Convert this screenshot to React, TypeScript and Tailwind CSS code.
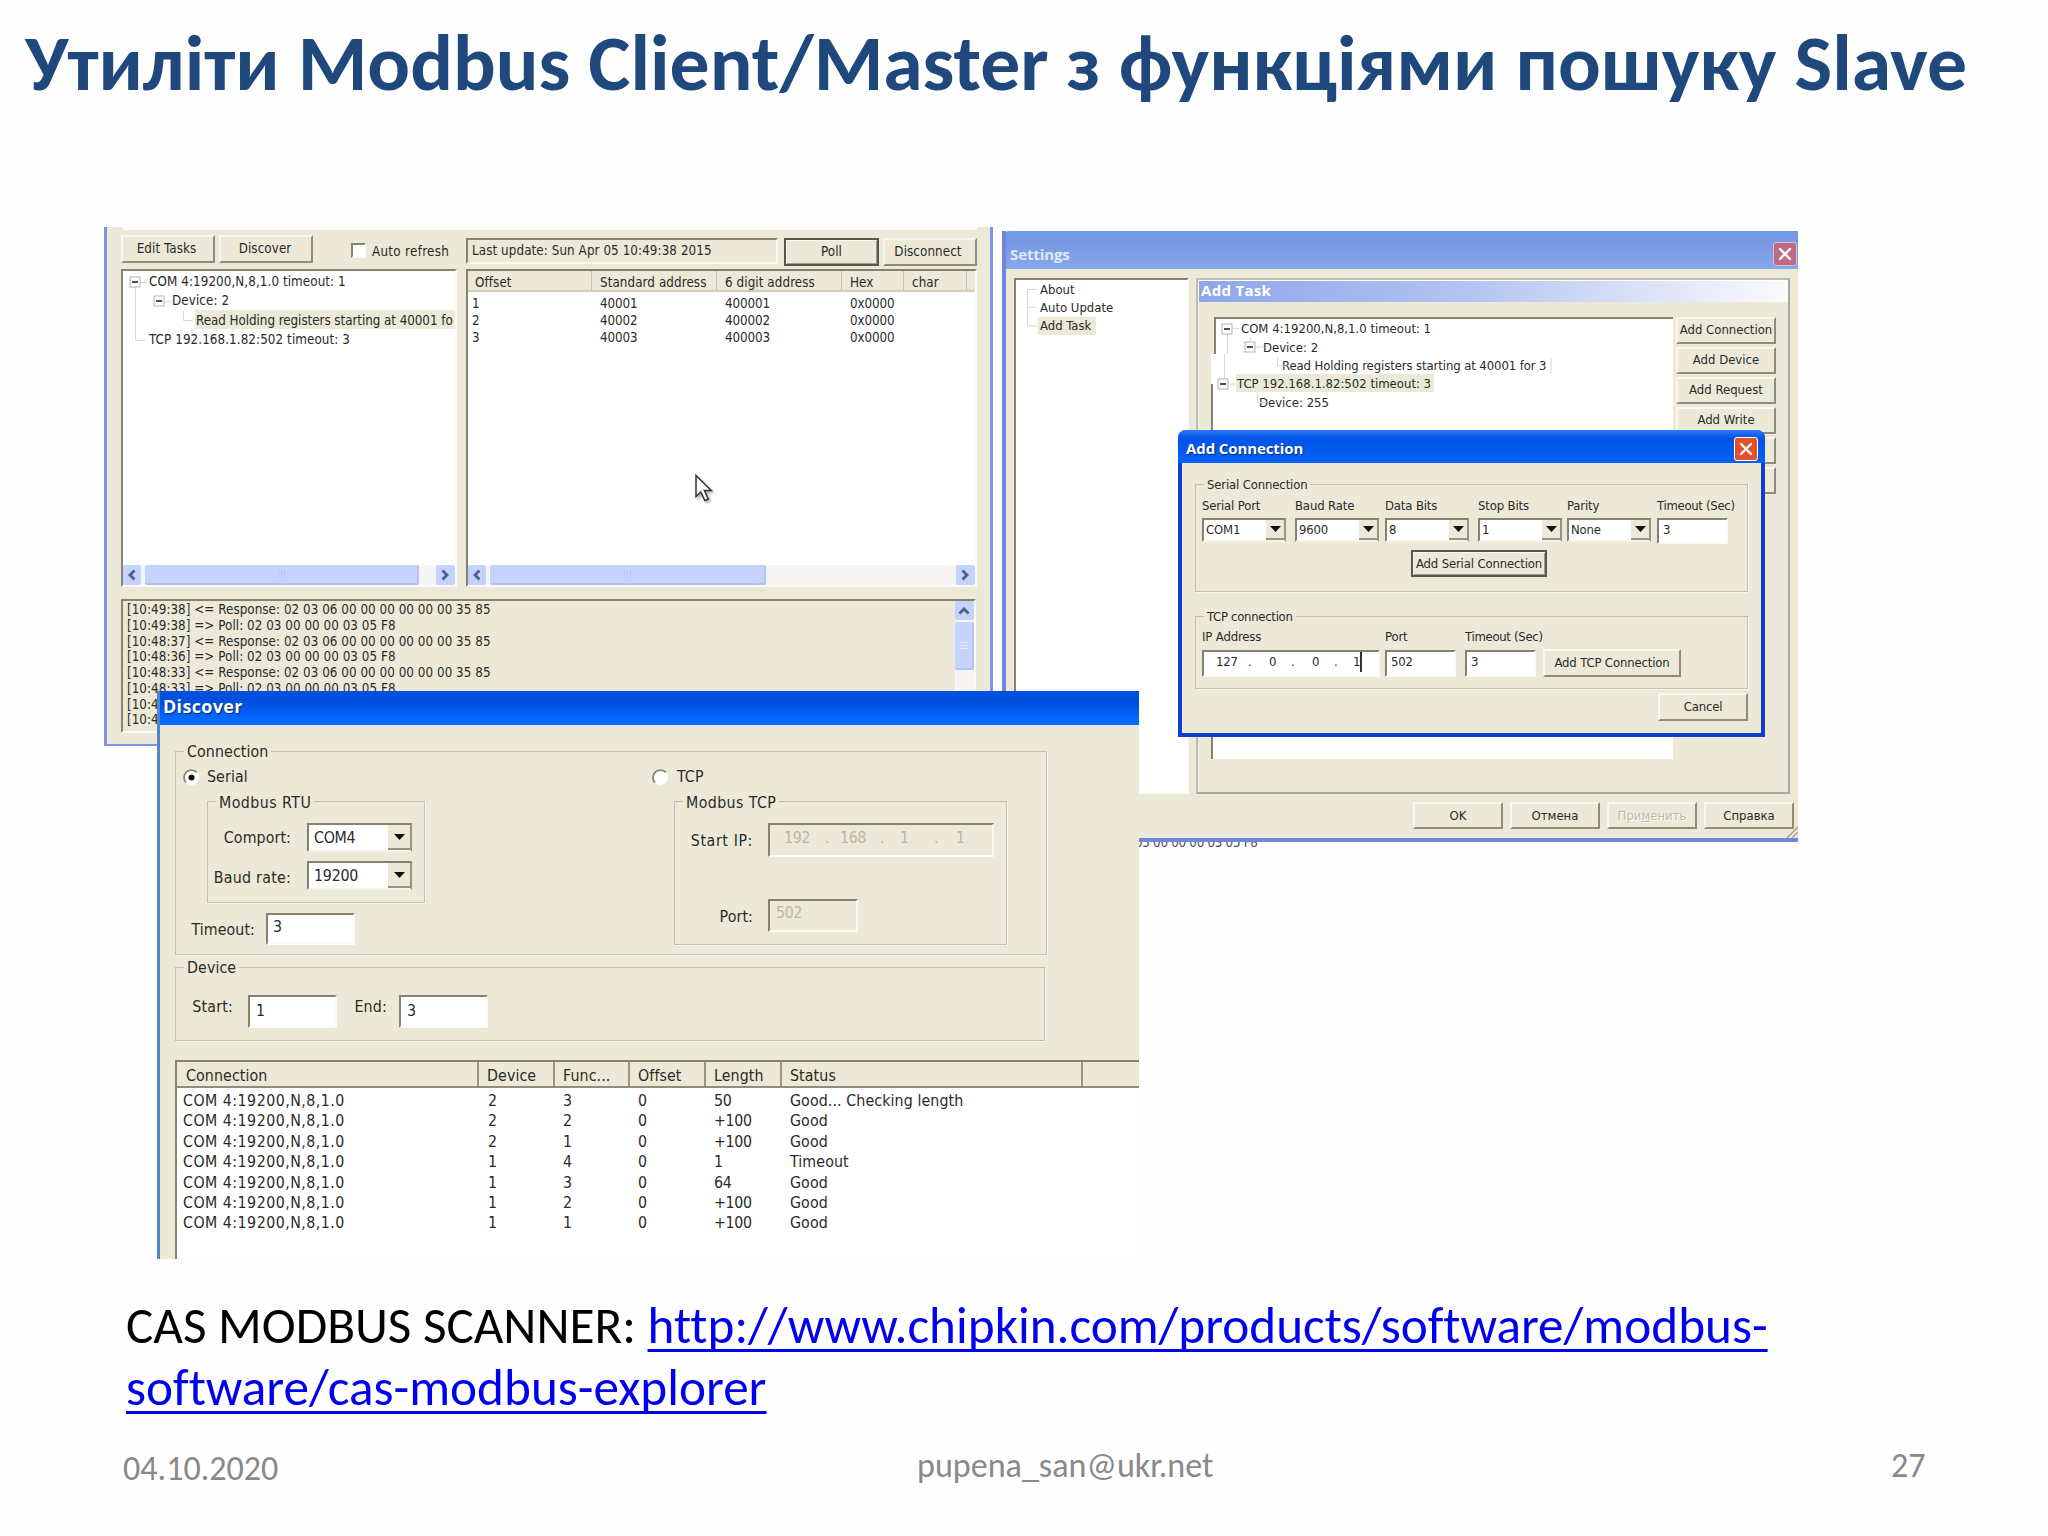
import type { ReactNode } from "react"
import clsx from "clsx"

interface BoxProps {
  className?: string
  children?: ReactNode
}

const logLines = [
  "[10:49:38] <= Response: 02 03 06 00 00 00 00 00 00 35 85",
  "[10:49:38] => Poll: 02 03 00 00 00 03 05 F8",
  "[10:48:37] <= Response: 02 03 06 00 00 00 00 00 00 35 85",
  "[10:48:36] => Poll: 02 03 00 00 00 03 05 F8",
  "[10:48:33] <= Response: 02 03 06 00 00 00 00 00 00 35 85",
  "[10:48:33] => Poll: 02 03 00 00 00 03 05 F8",
  "[10:48",
  "[10:48",
]

const registers = [
  ["1", "40001", "400001", "0x0000"],
  ["2", "40002", "400002", "0x0000"],
  ["3", "40003", "400003", "0x0000"],
]

const discovered = [
  ["COM 4:19200,N,8,1.0", "2", "3", "0", "50", "Good... Checking length"],
  ["COM 4:19200,N,8,1.0", "2", "2", "0", "+100", "Good"],
  ["COM 4:19200,N,8,1.0", "2", "1", "0", "+100", "Good"],
  ["COM 4:19200,N,8,1.0", "1", "4", "0", "1", "Timeout"],
  ["COM 4:19200,N,8,1.0", "1", "3", "0", "64", "Good"],
  ["COM 4:19200,N,8,1.0", "1", "2", "0", "+100", "Good"],
  ["COM 4:19200,N,8,1.0", "1", "1", "0", "+100", "Good"],
]

function Button({ className, children }: BoxProps) {
  return (
    <div
      className={clsx(
        "flex shrink-0 items-center justify-center border-2 border-t-[#faf8ee] border-l-[#faf8ee] border-r-[#8f8c7b] border-b-[#8f8c7b] bg-[#ece9d8] whitespace-nowrap",
        className,
      )}
    >
      {children}
    </div>
  )
}

function DefaultButton({ className, children }: BoxProps) {
  return (
    <div
      className={clsx(
        "flex shrink-0 items-center justify-center border-2 border-[#5a584c] bg-[#ece9d8] whitespace-nowrap shadow-[inset_1px_1px_0_#faf8ee,inset_-1px_-1px_0_#a09d8b]",
        className,
      )}
    >
      {children}
    </div>
  )
}

function Field({ className, children }: BoxProps) {
  return (
    <div
      className={clsx(
        "flex shrink-0 items-center border-2 border-t-[#85836f] border-l-[#85836f] border-r-[#fbfaf3] border-b-[#fbfaf3] whitespace-nowrap",
        className,
      )}
    >
      {children}
    </div>
  )
}

function Select({ className, arrow, children }: BoxProps & { arrow: string }) {
  return (
    <div
      className={clsx(
        "flex shrink-0 items-stretch border-2 border-t-[#85836f] border-l-[#85836f] border-r-[#97947f] border-b-[#f5f3e8] bg-white",
        className,
      )}
    >
      <span className="flex flex-1 items-center">{children}</span>
      <span className={clsx("flex items-center justify-center border-b-2 border-[#97947f] bg-[#ece9d8]", arrow)}>
        <svg width="11" height="6" viewBox="0 0 11 6">
          <path d="M0 0h11L5.500 6z" fill="#111" />
        </svg>
      </span>
    </div>
  )
}

function Group({ title, legend, className, children }: BoxProps & { title: string; legend?: string }) {
  return (
    <fieldset
      className={clsx("min-w-0 shrink-0 border border-[#c3c0ae] shadow-[1px_1px_0_#f8f6ea]", className)}
    >
      <legend className={clsx("ml-2 h-5 px-[3px] leading-[22px] whitespace-nowrap", legend)}>{title}</legend>
      {children}
    </fieldset>
  )
}

function Chevron({ className }: { className: string }) {
  return (
    <span className={clsx("flex shrink-0 items-center justify-center rounded-xs bg-[#c3d3fd]", className)}>
      <svg width="10" height="12" viewBox="0 0 10 12" fill="none" stroke="#4d6185" strokeWidth="2.8">
        <path d="M7.5 1.5L3 6l4.5 4.5" />
      </svg>
    </span>
  )
}

function HScroll({ thumb, className }: { thumb: string; className?: string }) {
  return (
    <div className={clsx("flex h-5 items-stretch bg-[#f6f5f3]", className)}>
      <Chevron className="w-[18px]" />
      <span
        className={clsx(
          "ml-1 flex items-center justify-center gap-[2px] rounded-xs border-r-2 border-b-2 border-[#b2c2f4] bg-[#c6d3fd]",
          thumb,
        )}
      >
        <i className="h-2 w-px bg-[#b4c6f6]" />
        <i className="h-2 w-px bg-[#b4c6f6]" />
        <i className="h-2 w-px bg-[#b4c6f6]" />
      </span>
      <Chevron className="ml-auto w-[19px] rotate-180" />
    </div>
  )
}

function CloseButton({ className }: { className: string }) {
  return (
    <div className={clsx("flex size-6 items-center justify-center rounded-[3px] border", className)}>
      <svg width="14" height="14" viewBox="0 0 14 14" stroke="#fff" strokeWidth="2.4" strokeLinecap="round">
        <path d="M2 2l10 10M12 2L2 12" />
      </svg>
    </div>
  )
}

function Toggle({ x, y }: { x: number; y: number }) {
  return (
    <g>
      <rect x={x - 5} y={y - 5} width="10" height="10" fill="#fff" stroke="#b3b1a5" />
      <path d={`M${x - 3} ${y}h6`} stroke="#222" strokeWidth="1.6" />
    </g>
  )
}

function Radio({ checked }: { checked?: boolean }) {
  return (
    <svg width="17" height="17" viewBox="0 0 17 17" className="shrink-0">
      <circle cx="8.5" cy="8.5" r="7.5" fill="#fff" />
      <path d="M3 13.5A7.3 7.3 0 0 1 13.8 3.4" fill="none" stroke="#85836f" strokeWidth="1.8" />
      {checked && <circle cx="8.5" cy="8.5" r="3" fill="#111" />}
    </svg>
  )
}

function ScannerWindow() {
  return (
    <section className="absolute top-[227px] left-[104px] h-[519px] w-[889px] border-r-[3px] border-b-2 border-l-[3px] border-[#8391e2] bg-[#ece9d8] text-[13.3px] tracking-[0.08px]">
      <div className="mr-[13px] ml-4 h-[3px] bg-[#fcfbf7]" />
      <div className="flex h-[39px] items-start pl-[14px]">
        <Button className="mt-[5px] h-7 w-[94px] pr-[3px]">Edit Tasks</Button>
        <Button className="mt-[5px] ml-1 h-7 w-[94px] pr-[2px]">Discover</Button>
        <Field className="mt-[13px] ml-[38px] size-[15px] bg-white" />
        <span className="mt-[11px] ml-[6px] w-[94px] leading-[21px] tracking-[0.3px]">Auto refresh</span>
        <Field className="mt-2 h-[26px] w-[312px] pb-px pl-1">Last update: Sun Apr 05 10:49:38 2015</Field>
        <DefaultButton className="mt-2 ml-[6px] h-[28px] w-[95px]">Poll</DefaultButton>
        <Button className="mt-2 ml-1 h-7 w-[94px] pr-1">Disconnect</Button>
      </div>

      <div className="flex h-[318px] pl-[14px]">
        <Field className="relative w-[336px] flex-col items-stretch! bg-white">
          <svg className="absolute top-0 left-0" width="80" height="90" fill="none" stroke="#d8d6ce">
            <path d="M12.5 11.5v58h10M17 11.5h7M36 25v6h12M60.5 40v9.500h9" />
            <Toggle x={12} y={11} />
            <Toggle x={36} y={30} />
          </svg>
          <div className="h-[19px] pt-px pl-[26px] leading-5">COM 4:19200,N,8,1.0 timeout: 1</div>
          <div className="h-[20px] pt-px pl-[49px] leading-5">Device: 2</div>
          <div className="ml-[72px] h-[19px] overflow-hidden bg-[#ece9d8] pl-px leading-[21px] tracking-[-0.05px]">
            Read Holding registers starting at 40001 fo
          </div>
          <div className="h-5 pl-[26px] leading-[22px]">TCP 192.168.1.82:502 timeout: 3</div>
          <HScroll thumb="w-[274px]" className="mt-auto" />
        </Field>

        <Field className="ml-[9px] w-[511px] flex-col items-stretch! bg-white">
          <div className="flex h-[21px] items-stretch border-b-2 border-[#d0cdbb] bg-[#ece9d8] leading-[23px]">
            <span className="w-[124px] border-r border-[#c3c0ae] pl-[7px]">Offset</span>
            <span className="w-[125px] border-r border-[#c3c0ae] pl-2">Standard address</span>
            <span className="w-[125px] border-r border-[#c3c0ae] pl-2">6 digit address</span>
            <span className="w-[62px] border-r border-[#c3c0ae] pl-2">Hex</span>
            <span className="w-[63px] border-r border-[#c3c0ae] pl-2">char</span>
          </div>
          <div className="mt-[3px] tracking-[-0.1px]">
            {registers.map((row) => (
              <div key={row[0]} className="flex h-[17px] leading-[18px]">
                <span className="w-[124px] pl-1">{row[0]}</span>
                <span className="w-[125px] pl-2">{row[1]}</span>
                <span className="w-[125px] pl-2">{row[2]}</span>
                <span className="pl-2">{row[3]}</span>
              </div>
            ))}
          </div>
          <HScroll thumb="w-[276px]" className="mt-auto" />
        </Field>
      </div>

      <Field className="mt-3 ml-[14px] h-[134px] w-[855px] items-stretch!">
        <div className="flex-1 pt-px pl-1">
          {logLines.map((line, i) => (
            <div key={i} className="h-[15.75px] leading-[16px] tracking-[0.04px]">
              {line}
            </div>
          ))}
        </div>
        <div className="flex w-[19px] flex-col bg-[#f6f5f3]">
          <Chevron className="h-[19px] w-[19px] rotate-90" />
          <span className="mt-[2px] flex h-[48px] flex-col items-center justify-center gap-[2px] rounded-xs border-r-2 border-b-2 border-[#b2c2f4] bg-[#c6d3fd]">
            <i className="h-px w-2 bg-[#e6edff]" />
            <i className="h-px w-2 bg-[#e6edff]" />
            <i className="h-px w-2 bg-[#e6edff]" />
          </span>
        </div>
      </Field>

      {/* Mouse pointer over the register list */}
      <svg className="absolute top-[247px] left-[588px] drop-shadow-[2px_2px_1px_rgba(0,0,0,0.3)]" width="18" height="29" viewBox="0 0 18 29">
        <path d="M1 1.500v21l4.800-4.500 4 8.500 3.400-1.500-3.800-8.500h6.800z" fill="#fff" stroke="#333" strokeWidth="1.500" />
      </svg>
    </section>
  )
}

function SettingsWindow() {
  return (
    <section className="absolute top-[231px] left-[1002px] flex h-[611px] w-[796px] flex-col overflow-hidden border-b-4 border-l-4 border-[#7086dc] bg-[#ece9d8] text-[13px]">
      <div className="-ml-1 flex h-[38px] shrink-0 items-center rounded-tl-lg bg-linear-to-b from-[#6f9be8] via-[#7b98e2] via-30% to-[#84a8ec] pt-2 pl-2">
        <span className="font-['Open_Sans',sans-serif] text-[15px] font-bold tracking-[-0.1px] text-[#e0e9fb]">Settings</span>
        <CloseButton className="mr-px ml-auto border-[#d3c0dc] bg-[#bd6d83]" />
      </div>

      <div className="flex h-[525px] shrink-0 pt-[9px]">
        <Field className="relative ml-2 w-[175px] flex-col items-stretch! bg-white">
          <svg className="absolute top-0 left-0" width="30" height="60" fill="none" stroke="#d8d6ce">
            <path d="M21 9.500h-9.500v36.500h10M11.500 27.500h9" />
          </svg>
          <div className="h-[18px] pl-6 leading-5">About</div>
          <div className="h-[19px] pl-6 leading-5">Auto Update</div>
          <div className="ml-[22px] h-[18px] w-[58px] bg-[#ece9d8] pl-[2px] leading-[18px]">Add Task</div>
        </Field>

        <div className="ml-[7px] w-[594px] border-2 border-[#c0bdb0] border-r-[#aaa89c] border-b-[#aaa89c]">
          <div className="flex h-[22px] items-center border-t border-l border-white bg-linear-to-r from-[#8ea5e8] via-[#b3c3f1] via-45% to-[#fbfbfd] pb-[3px] pl-[2px]">
            <span className="font-['Open_Sans',sans-serif] text-[15px] leading-5 font-bold tracking-[0.3px] text-white">Add Task</span>
          </div>
          <div className="flex pt-[15px] pl-[13px]">
            <div className="relative h-[442px] w-[462px]">
              <div className="ml-[3px] h-[37px] border-t-2 border-l-2 border-[#85836f] bg-white" />
              <div className="h-[30px] bg-white" />
              <div className="h-[375px] border-l-2 border-[#85836f] bg-white" />
              <div className="absolute inset-0">
                <svg className="absolute top-0 left-0" width="90" height="100" fill="none" stroke="#d8d6ce">
                  <path d="M16.500 17v20M13.500 37v25M22 11.500h6M45 30h7M39.500 20v4M66.500 40v9h10M19 67h5M46.500 76v9.500h9" />
                  <Toggle x={16} y={12} />
                  <Toggle x={39} y={30} />
                  <Toggle x={12} y={67} />
                </svg>
                <div className="h-5 pt-px pl-[30px] leading-[21px]">COM 4:19200,N,8,1.0 timeout: 1</div>
                <div className="h-[18px] pl-[52px] leading-[21px]">Device: 2</div>
                <div className="h-[19px] pl-[71px] leading-[21px] tracking-[-0.1px]">
                  <span className="border-r-2 border-[#ece9d8] pr-1">Read Holding registers starting at 40001 for 3</span>
                </div>
                <div className="ml-[25px] h-[18px] w-[198px] bg-[#ece9d8] pl-px leading-[19px]">
                  TCP 192.168.1.82:502 timeout: 3
                </div>
                <div className="h-[18px] pl-[48px] leading-[21px]">Device: 255</div>
              </div>
            </div>
            <div className="ml-[3px] flex flex-col gap-[3px]">
              <Button className="h-[27px] w-[100px] pb-[2px]">Add Connection</Button>
              <Button className="h-[27px] w-[100px] pb-[2px]">Add Device</Button>
              <Button className="h-[27px] w-[100px] pb-[2px]">Add Request</Button>
              <Button className="h-[27px] w-[100px] pb-[2px]">Add Write</Button>
              <Button className="h-[27px] w-[100px]" />
              <Button className="h-[27px] w-[100px]" />
            </div>
          </div>
        </div>
      </div>

      <div className="flex justify-end gap-[7px] pt-2 pr-1">
        <Button className="h-[27px] w-[90px]">OK</Button>
        <Button className="h-[27px] w-[90px]">Отмена</Button>
        <Button className="h-[27px] w-[90px] text-[#bdbaa9] [text-shadow:1px_1px_0_#fff]">
          <span>
            При<u>м</u>енить
          </span>
        </Button>
        <Button className="h-[27px] w-[90px]">Справка</Button>
      </div>
      <svg className="absolute right-0 bottom-0" width="12" height="12" stroke="#a8a595" strokeWidth="1.5">
        <path d="M1 12L12 1M6 12l6-6" />
      </svg>
    </section>
  )
}

const serialFields = [
  { label: "Serial Port", value: "COM1", width: "w-[93px]" },
  { label: "Baud Rate", value: "9600", width: "w-[90px]" },
  { label: "Data Bits", value: "8", width: "w-[93px]" },
  { label: "Stop Bits", value: "1", width: "w-[89px]" },
  { label: "Parity", value: "None", width: "w-[90px]" },
]

function AddConnectionDialog() {
  return (
    <section className="absolute top-[430px] left-[1178px] h-[307px] w-[587px] rounded-t-lg border-x-4 border-b-4 border-[#0f3fd0] bg-[#ece9d8] text-[13px] tracking-[-0.15px] whitespace-nowrap">
      <div className="-mx-1 flex h-[33px] items-center rounded-t-lg bg-linear-to-b from-[#2a7bf5] via-[#0053e6] via-25% to-[#0462fa] pt-1 pr-[7px] pl-2">
        <span className="font-['Open_Sans',sans-serif] text-[15px] font-bold tracking-[-0.1px] text-white [text-shadow:1px_1px_1px_#0a2a80]">
          Add Connection
        </span>
        <CloseButton className="ml-auto border-white bg-[#e2512c]" />
      </div>

      <Group title="Serial Connection" className="mt-[11px] ml-[13px] h-[118px] w-[553px]">
        <div className="flex pl-[6px]">
          {serialFields.map((f) => (
            <div key={f.label} className={f.width}>
              <div className="h-6 leading-[23px]">{f.label}</div>
              <Select className="h-6 w-[84px] pl-[2px]" arrow="w-[18px]">
                {f.value}
              </Select>
            </div>
          ))}
          <div>
            <div className="h-6 leading-[23px] tracking-[-0.3px]">Timeout (Sec)</div>
            <Field className="h-[26px] w-[71px] bg-white pb-[2px] pl-1">3</Field>
          </div>
        </div>
        <DefaultButton className="mt-[6px] ml-[215px] h-[27px] w-[136px]">Add Serial Connection</DefaultButton>
      </Group>

      <Group title="TCP connection" legend="tracking-[-0.3px]" className="mt-[14px] ml-[13px] h-[83px] w-[553px]">
        <div className="flex items-end pl-[6px]">
          <div className="w-[183px]">
            <div className="h-6 leading-[22px]">IP Address</div>
            <Field className="h-[27px] w-[178px] bg-white pb-[3px]">
              <span className="w-[44px] pl-[12px]">127</span>
              <span className="w-[21px]">.</span>
              <span className="w-[22px]">0</span>
              <span className="w-[21px]">.</span>
              <span className="w-[22px]">0</span>
              <span className="w-[19px]">.</span>
              <span className="border-r-2 border-[#333]">1</span>
            </Field>
          </div>
          <div className="w-[80px]">
            <div className="h-6 leading-[22px]">Port</div>
            <Field className="h-[27px] w-[71px] bg-white pb-[3px] pl-1">502</Field>
          </div>
          <div className="w-[78px]">
            <div className="h-6 leading-[22px] tracking-[-0.3px]">Timeout (Sec)</div>
            <Field className="h-[27px] w-[71px] bg-white pb-[3px] pl-1">3</Field>
          </div>
          <Button className="h-[28px] w-[138px]">Add TCP Connection</Button>
        </div>
      </Group>
      <Button className="mt-1 mr-[13px] ml-auto h-[28px] w-[90px]">Cancel</Button>
    </section>
  )
}

function DiscoverWindow() {
  return (
    <section className="absolute top-[691px] left-[157px] h-[568px] w-[982px] overflow-hidden border-l-[3px] border-[#4f86cf] bg-[#ece9d8] text-[15.800px] tracking-[0.1px]">
      <div className="-ml-[3px] flex h-[34px] items-center bg-linear-to-b from-[#0050e0] from-40% to-[#0468ff] to-80% pb-[3px] pl-[6px]">
        <span className="font-['Open_Sans',sans-serif] text-[18px] font-bold tracking-[0.3px] text-white [text-shadow:1px_1px_1px_#0a2a80]">Discover</span>
      </div>

      <Group title="Connection" className="mt-4 ml-[15px] h-[214px] w-[872px]">
        <div className="flex h-[30px] items-center pt-[2px] pl-[7px]">
          <Radio checked />
          <span className="w-[452px] shrink-0 pl-[7px]">Serial</span>
          <Radio />
          <span className="pl-2">TCP</span>
        </div>
        <div className="flex items-start">
          <div className="w-[498px]">
            <Group title="Modbus RTU" legend="leading-[23px]! tracking-[0.45px]" className="ml-[31px] h-[112px] w-[218px]">
              <div className="mt-3 flex h-[29px] items-center">
                <span className="w-[83px] pt-px text-right">Comport:</span>
                <Select className="ml-4 h-[29px] w-[105px] pl-[5px] tracking-[-0.3px]" arrow="w-[22px]">
                  COM4
                </Select>
              </div>
              <div className="mt-[9px] flex h-[29px] items-center">
                <span className="w-[83px] pt-1 text-right tracking-[0.25px]">Baud rate:</span>
                <Select className="ml-4 h-[29px] w-[105px] pl-[5px] tracking-[-0.2px]" arrow="w-[22px]">
                  19200
                </Select>
              </div>
            </Group>
            <div className="mt-[10px] flex h-[31px] items-center">
              <span className="w-[79px] pt-[3px] text-right">Timeout:</span>
              <Field className="ml-[11px] h-[32px] w-[89px] bg-white pb-1 pl-[5px]">3</Field>
            </div>
          </div>
          <Group title="Modbus TCP" legend="leading-[23px]! tracking-[0.4px]" className="h-[154px] w-[333px]">
            <div className="mt-3 flex h-[33px] items-center">
              <span className="w-[78px] pt-[2px] text-right tracking-[0.6px]">Start IP:</span>
              <Field className="ml-[15px] h-[34px] w-[226px] pb-[4px] tracking-[-0.4px] text-[#bab7a8]">
                <span className="w-[55px] pl-[14px]">192</span>
                <span className="w-[15px]">.</span>
                <span className="w-[40px]">168</span>
                <span className="w-[20px]">.</span>
                <span className="w-[34px]">1</span>
                <span className="w-[22px]">.</span>
                <span>1</span>
              </Field>
            </div>
            <div className="mt-[43px] flex h-[32px] items-center">
              <span className="w-[78px] pt-[3px] text-right">Port:</span>
              <Field className="ml-[15px] h-[33px] w-[90px] pb-1 pl-[6px] tracking-[-0.4px] text-[#bab7a8]">502</Field>
            </div>
          </Group>
        </div>
      </Group>

      <Group title="Device" className="mt-[2px] ml-[15px] h-[84px] w-[870px]">
        <div className="mt-[18px] flex h-[32px] items-center">
          <span className="w-[57px] pb-[9px] text-right tracking-[0.2px]">Start:</span>
          <Field className="ml-[15px] h-[33px] w-[89px] bg-white pl-[6px]">1</Field>
          <span className="w-[50px] pb-[9px] text-right tracking-[0.2px]">End:</span>
          <Field className="ml-3 h-[33px] w-[89px] bg-white pl-[6px]">3</Field>
        </div>
      </Group>

      <div className="mt-[19px] ml-[15px] h-[199px] border-t-2 border-l-2 border-[#85836f] bg-white">
        <div className="flex h-[26px] border-b-2 border-[#908d7b] bg-[#ece9d8] leading-[28px] *:border-r-2 *:border-[#97947f]">
          <span className="w-[302px] pl-[9px]">Connection</span>
          <span className="w-[76px] pl-2">Device</span>
          <span className="w-[75px] pl-2">Func...</span>
          <span className="w-[76px] pl-2">Offset</span>
          <span className="w-[76px] pl-2">Length</span>
          <span className="w-[301px] pl-2">Status</span>
        </div>
        <div className="pt-[2px]">
          {discovered.map((row, i) => (
            <div key={i} className="flex h-[20.400px] leading-[22px]">
              <span className="w-[302px] pl-[6px] tracking-[0.48px]">{row[0]}</span>
              <span className="w-[76px] pl-[9px]">{row[1]}</span>
              <span className="w-[75px] pl-2">{row[2]}</span>
              <span className="w-[76px] pl-2">{row[3]}</span>
              <span className="w-[76px] pl-2 tracking-[-0.3px]">{row[4]}</span>
              <span className="pl-2">{row[5]}</span>
            </div>
          ))}
        </div>
      </div>
    </section>
  )
}

export default function App() {
  return (
    <main className="relative flex h-[1536px] w-[2048px] flex-col overflow-hidden bg-[#fefefe] font-['Carlito','Lato','Open_Sans',sans-serif] [font-variant-ligatures:none]">
      <h1 className="h-[227px] pt-[18px] pl-[25px] text-[79.700px] leading-[90px] font-bold whitespace-nowrap text-[#1f497d]">
        Утиліти Modbus Client/Master з функціями пошуку Slave
      </h1>

      {/* Screens of the scanner, overlapping each other */}
      <div className="h-[1068px] font-['DejaVu_Sans_Condensed','DejaVu_Sans',sans-serif] text-[#2b2b26]">
        <ScannerWindow />
        <div className="absolute top-[835px] left-[1139px] h-[12px] overflow-hidden text-[13.3px] leading-[15px] tracking-[-0.3px] -indent-[4px] text-[#4a4a60]">
          05 00 00 00 03 05 F8
        </div>
        <SettingsWindow />
        <AddConnectionDialog />
        <DiscoverWindow />
      </div>

      <p className="pl-[126px] text-[51.200px] leading-[61.500px] whitespace-nowrap text-black">
        CAS MODBUS SCANNER:{" "}
        <a className="text-[#0000ee] underline decoration-[3px] underline-offset-[6px] [text-decoration-skip-ink:none]">
          http://www.chipkin.com/products/software/modbus-
          <br />
          software/cas-modbus-explorer
        </a>
      </p>

      <footer className="mt-[28px] flex h-10 items-center text-[34.100px] text-[#898989]">
        <span className="w-[794px] pt-[5px] pl-[123px]">04.10.2020</span>
        <span className="w-[974px] pl-[123px]">pupena_san@ukr.net</span>
        <span className="pl-[123px]">27</span>
      </footer>
    </main>
  )
}
